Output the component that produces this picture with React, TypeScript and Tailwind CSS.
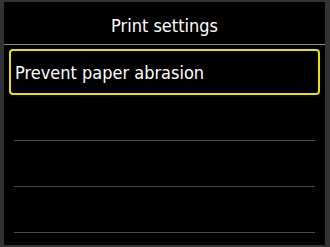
import React from "react"

const rows = ["", "", ""]

export default function App() {
  return (
    <div
      className="w-[330px] h-[247px] bg-[#333333] pl-[4px] pr-[5px] pt-[2px] pb-[2px]"
      style={{ fontFamily: '"DejaVu Sans Condensed", "DejaVu Sans", sans-serif' }}
    >
      <div className="h-full bg-black flex flex-col">
        <div className="h-[42px] flex items-center justify-center pt-[4px] text-white text-[18px]">
          Print settings
        </div>
        <div className="h-px bg-[#8a8a8a]" />
        <div className="px-[5px] pt-[4px]">
          <div className="h-[46px] border-2 border-[#e8e000] rounded-[4px] flex items-center pl-[4px] text-white text-[18px]">
            Prevent paper abrasion
          </div>
        </div>
        {rows.map((_, i) => (
          <div key={i} className="px-[10px]">
            <div className="h-[46px] border-b border-[#4a4a4a]" />
          </div>
        ))}
      </div>
    </div>
  )
}
